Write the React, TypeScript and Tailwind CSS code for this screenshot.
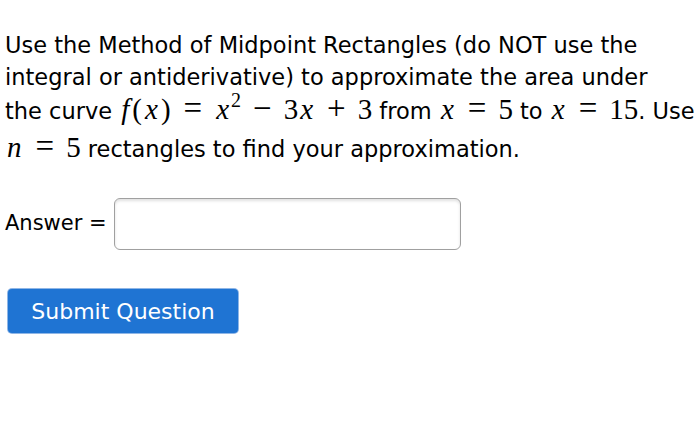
import React from "react";

const M = ({ children }: { children: React.ReactNode }) => (
  <span className="text-[29px] font-['Liberation_Serif',serif]">{children}</span>
);
const V = ({ children }: { children: React.ReactNode }) => (
  <span className="italic px-[2px]">{children}</span>
);
const P = ({ children }: { children: React.ReactNode }) => (
  <span className="mx-[1px]">{children}</span>
);
const Op = ({ children }: { children: React.ReactNode }) => (
  <span className="mx-[12px] text-[33px] leading-none">{children}</span>
);

export default function App() {
  return (
    <div className="w-[700px] h-[423px] bg-white text-black font-['DejaVu_Sans',sans-serif] text-[22.5px]">
      <div className="pl-[5px] pt-[29px] leading-[32px] whitespace-nowrap">
        <div>Use the Method of Midpoint Rectangles (do NOT use the</div>
        <div>integral or antiderivative) to approximate the area under</div>
        <div className="-mt-[1px]">
          the curve{" "}
          <M>
            <V>f</V>
            <P>(</P>
            <V>x</V>
            <P>)</P>
            <Op>=</Op>
            <V>x</V>
            <sup className="text-[20px] -top-[12px]">2</sup>
            <Op>−</Op>3<V>x</V>
            <Op>+</Op>3
          </M>{" "}
          from{" "}
          <M>
            <V>x</V>
            <Op>=</Op>5
          </M>{" "}
          to{" "}
          <M>
            <V>x</V>
            <Op>=</Op>15
          </M>
          . Use
        </div>
        <div className="mt-[3px]">
          <M>
            <V>n</V>
            <Op>=</Op>5
          </M>{" "}
          rectangles to find your approximation.
        </div>
      </div>

      <div className="flex items-center pl-[5px] mt-[33px]">
        <span className="mr-[7px] text-[21px]">Answer =</span>
        <input
          type="text"
          className="w-[347px] h-[52px] rounded-[6px] border border-[#a0a0a0] shadow-[inset_0_2px_3px_rgba(0,0,0,0.12)] outline-none"
        />
      </div>

      <div className="pl-[8px] mt-[39px]">
        <button className="w-[230px] h-[44px] rounded-[4px] bg-[#1f74d3] text-white text-[22px] shadow-[0_0_0_1px_#8fb6e6]">
          Submit Question
        </button>
      </div>
    </div>
  );
}
